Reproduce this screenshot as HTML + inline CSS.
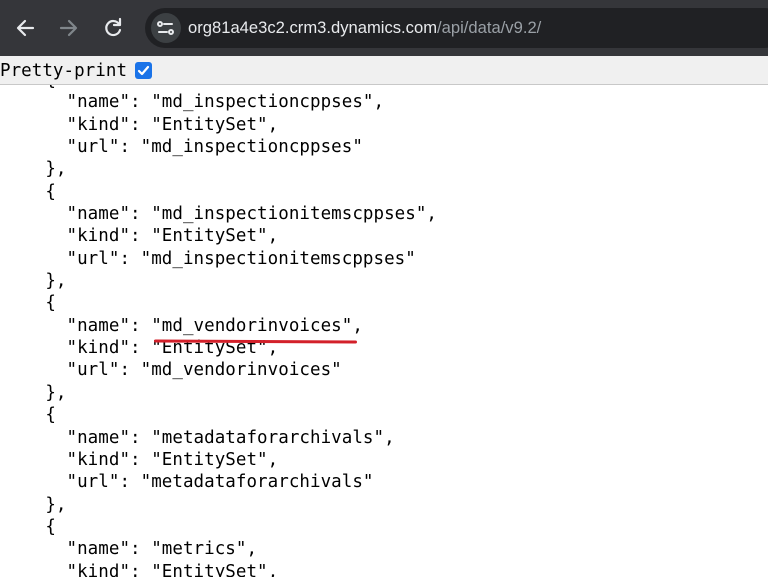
<!DOCTYPE html>
<html><head><meta charset="utf-8"><style>
html,body{margin:0;padding:0;width:768px;height:577px;overflow:hidden;background:#fff;position:relative}
.top{position:absolute;left:0;top:0;width:768px;height:56px;background:#35363a}
.omni{position:absolute;left:145px;top:8px;width:640px;height:40px;border-radius:20px;background:#202124}
.url{position:absolute;left:188px;top:18px;font:16.6px "Liberation Sans",sans-serif;color:#e8eaed}
.url span{color:#9aa0a6}
pre{position:absolute;left:3px;top:69px;margin:0;font:17.5px/22.35px "DejaVu Sans Mono","Liberation Mono",monospace;color:#000;letter-spacing:0.05px}
.pp{position:absolute;left:0;top:56px;width:768px;height:28px;background:#f0f0f0;border-bottom:1px solid #c8c8c8}
.pp .t{position:absolute;left:0;top:5px;font:17.5px "DejaVu Sans Mono","Liberation Mono",monospace;color:#000;letter-spacing:0.05px}
.cb{position:absolute;left:135px;top:6px;width:17px;height:17px;border-radius:3px;background:#1a73e8}
.red{position:absolute;left:154px;top:340px;width:203px;height:3px;background:#d3202a;border-radius:2px;transform:rotate(0.3deg)}
</style></head><body>
<pre>    {
      "name": "md_inspectioncppses",
      "kind": "EntitySet",
      "url": "md_inspectioncppses"
    },
    {
      "name": "md_inspectionitemscppses",
      "kind": "EntitySet",
      "url": "md_inspectionitemscppses"
    },
    {
      "name": "md_vendorinvoices",
      "kind": "EntitySet",
      "url": "md_vendorinvoices"
    },
    {
      "name": "metadataforarchivals",
      "kind": "EntitySet",
      "url": "metadataforarchivals"
    },
    {
      "name": "metrics",
      "kind": "EntitySet",
</pre>
<div class="red"></div>
<div class="top">
  <svg width="140" height="56" style="position:absolute;left:0;top:0" fill="none" stroke-width="2.2" stroke-linecap="round" stroke-linejoin="round">
    <path d="M33 28H19M25 21l-7 7 7 7" stroke="#e8eaed"/>
    <path d="M61 28h14M69 21l7 7-7 7" stroke="#80868b"/>
    <path d="M119 24a7 7 0 1 0 1 6" stroke="#e8eaed"/>
    <path d="M120 19v6h-6" stroke="#e8eaed"/>
  </svg>
  <div class="omni">
    <svg width="40" height="40" style="position:absolute;left:1px;top:0" fill="none" stroke="#e8eaed" stroke-width="2" stroke-linecap="round">
      <circle cx="20" cy="20" r="15" fill="#3c4043" stroke="none"/>
      <circle cx="14" cy="16" r="2"/><path d="M18 16h8"/>
      <circle cx="25" cy="24" r="2"/><path d="M13 24h8"/>
    </svg>
  </div>
  <div class="url">org81a4e3c2.crm3.dynamics.com<span>/api/data/v9.2/</span></div>
</div>
<div class="pp"><div class="t">Pretty-print</div>
  <div class="cb"><svg width="17" height="17" fill="none" stroke="#fff" stroke-width="2.2" stroke-linecap="round" stroke-linejoin="round"><path d="M4 9l3 3 6-7"/></svg></div>
</div>
</body></html>
